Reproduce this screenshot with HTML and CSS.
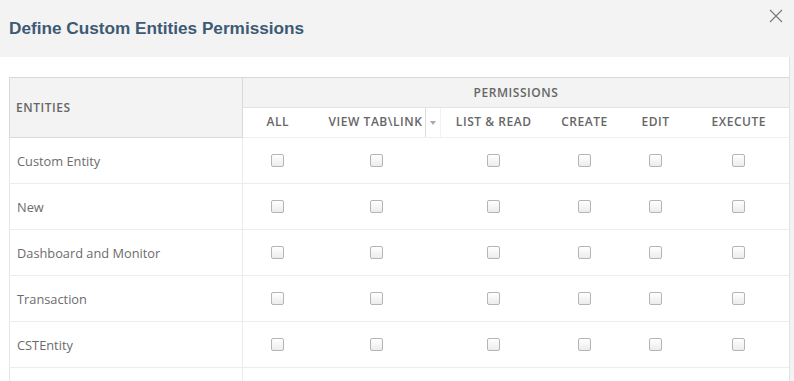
FILE: index.html
```html
<!DOCTYPE html>
<html>
<head>
<meta charset="utf-8">
<link rel="stylesheet" href="styles.css">
</head>
<body>
<div class="modal">
  <div class="modal-header">
    <h1 class="title">Define Custom Entities Permissions</h1>
    <button class="close" aria-label="Close">
      <svg width="14" height="14" viewBox="0 0 14 14"><path d="M1 1L13 13M13 1L1 13" stroke="#777" stroke-width="1.1" fill="none"/></svg>
    </button>
  </div>
  <div class="modal-body">
    <table class="perm">
      <colgroup>
        <col class="c-ent"><col class="c-all"><col class="c-view"><col class="c-list"><col class="c-create"><col class="c-edit"><col class="c-exec">
      </colgroup>
      <thead>
        <tr class="h1">
          <th rowspan="2" class="ent-h">ENTITIES</th>
          <th colspan="6" class="perm-h">PERMISSIONS</th>
        </tr>
        <tr class="h2">
          <th>ALL</th>
          <th class="view-h"><span class="view-txt">VIEW TAB\LINK</span><span class="dd"><span class="tri"></span></span></th>
          <th>LIST &amp; READ</th>
          <th>CREATE</th>
          <th>EDIT</th>
          <th class="last">EXECUTE</th>
        </tr>
      </thead>
      <tbody>
        <tr><td class="name">Custom Entity</td><td><span class="cb"></span></td><td><span class="cb"></span></td><td><span class="cb"></span></td><td><span class="cb"></span></td><td><span class="cb"></span></td><td><span class="cb"></span></td></tr>
        <tr><td class="name">New</td><td><span class="cb"></span></td><td><span class="cb"></span></td><td><span class="cb"></span></td><td><span class="cb"></span></td><td><span class="cb"></span></td><td><span class="cb"></span></td></tr>
        <tr><td class="name">Dashboard and Monitor</td><td><span class="cb"></span></td><td><span class="cb"></span></td><td><span class="cb"></span></td><td><span class="cb"></span></td><td><span class="cb"></span></td><td><span class="cb"></span></td></tr>
        <tr><td class="name">Transaction</td><td><span class="cb"></span></td><td><span class="cb"></span></td><td><span class="cb"></span></td><td><span class="cb"></span></td><td><span class="cb"></span></td><td><span class="cb"></span></td></tr>
        <tr><td class="name">CSTEntity</td><td><span class="cb"></span></td><td><span class="cb"></span></td><td><span class="cb"></span></td><td><span class="cb"></span></td><td><span class="cb"></span></td><td><span class="cb"></span></td></tr>
        <tr><td class="name"></td><td></td><td></td><td></td><td></td><td></td><td></td></tr>
      </tbody>
    </table>
  </div>
</div>
</body>
</html>
```
FILE: styles.css
```css
html, body { margin: 0; padding: 0; }
body { background: #f3f3f3; width: 794px; height: 381px; overflow: hidden; font-family: "Open Sans", sans-serif; }
.modal { display: flex; flex-direction: column; height: 381px; }
.modal-header { height: 57px; background: #f3f3f3; display: flex; align-items: flex-start; justify-content: space-between; box-sizing: border-box; }
.title { margin: 0; padding: 18px 0 0 9px; font-family: "Liberation Sans", Arial, sans-serif; font-weight: bold; font-size: 17.2px; color: #3d5a75; line-height: 20px; }
.close { border: 0; background: none; padding: 0; margin: 9px 11px 0 0; width: 14px; height: 14px; display: block; }
.close svg { display: block; }
.modal-body { flex: 1; background: #fff; width: 790px; border-right: 1px solid #e2e2e2; box-sizing: border-box; padding: 20px 0 0 9px; overflow: hidden; }
.perm { border-collapse: collapse; table-layout: fixed; width: 780px; }
.c-ent { width: 233px; }
.c-all { width: 70px; }
.c-view { width: 128px; }
.c-list { width: 106px; }
.c-create { width: 76px; }
.c-edit { width: 66px; }
.c-exec { width: 101px; }
.perm th { font-family: "Open Sans", sans-serif; font-weight: 600; font-size: 12px; letter-spacing: 0.55px; color: #666; padding: 0; white-space: nowrap; }
.perm .h1 th { height: 29px; }
.perm .h2 th { height: 30px; border-bottom: 1px solid #f0f0f0; padding-bottom: 2px; box-sizing: border-box; }
.ent-h { background: #f3f3f3; border: 1px solid #d9d9d9; text-align: left; padding-left: 6px !important; }
.perm-h { background: #f3f3f3; border: 1px solid #d9d9d9; border-bottom: 1px solid #e3e3e3; text-align: center; }
.h2 th.view-h { border-right: 1px solid #f2f2f2; }
.h2 th.last { border-right: 1px solid #d9d9d9; }
.view-h { position: relative; overflow: hidden; text-align: left; }
.view-txt { display: block; padding-left: 16px; width: 118px; overflow: hidden; box-sizing: border-box; }
.dd { position: absolute; left: 112px; top: 0; bottom: 0; width: 14px; border-left: 1px solid #dcdcdc; }
.tri { position: absolute; left: 4px; top: 13px; width: 0; height: 0; border-left: 3.5px solid transparent; border-right: 3.5px solid transparent; border-top: 4px solid #aaa; }
.perm td { height: 45px; border-bottom: 1px solid #ececec; text-align: center; padding: 0; vertical-align: middle; }
.perm td.name { text-align: left; padding-left: 7px; font-size: 12.8px; color: #6c6c6c; border-left: 1px solid #e6e6e6; border-right: 1px solid #ececec; }
.perm td:last-child { border-right: 1px solid #e6e6e6; }
.cb { display: inline-block; width: 11px; height: 11px; border: 1px solid #b5b5b5; border-radius: 2px; background: linear-gradient(#ffffff, #ececec); vertical-align: middle; margin-top: -3px; }
```
